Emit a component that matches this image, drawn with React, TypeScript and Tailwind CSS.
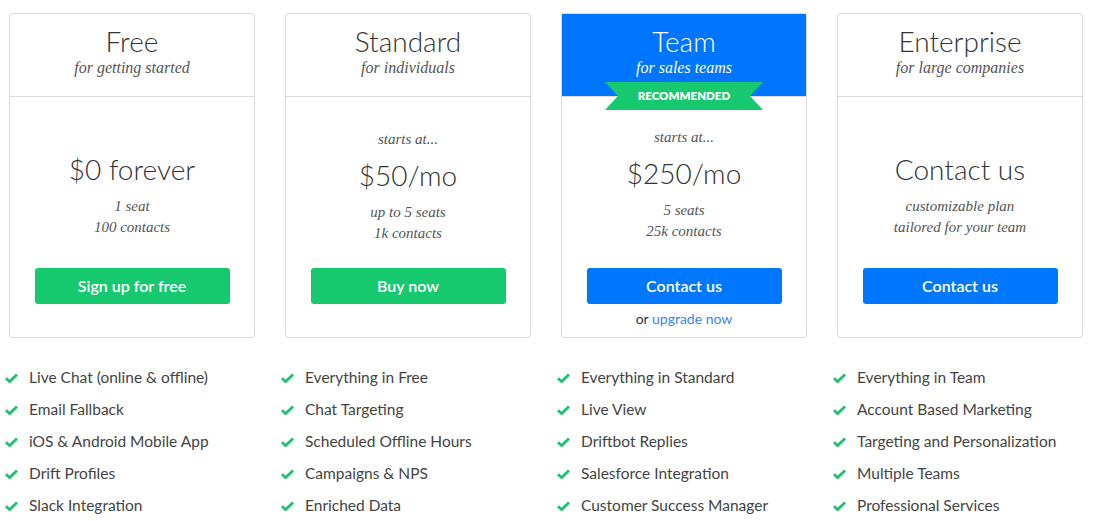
import React from 'react';

const plans = [
  {
    name: 'Free',
    tagline: 'for getting started',
    startsAt: false,
    price: '$0 forever',
    details: ['1 seat', '100 contacts'],
    cta: 'Sign up for free',
    color: 'green',
    features: ['Live Chat (online & offline)', 'Email Fallback', 'iOS & Android Mobile App', 'Drift Profiles', 'Slack Integration'],
  },
  {
    name: 'Standard',
    tagline: 'for individuals',
    startsAt: true,
    price: '$50/mo',
    details: ['up to 5 seats', '1k contacts'],
    cta: 'Buy now',
    color: 'green',
    features: ['Everything in Free', 'Chat Targeting', 'Scheduled Offline Hours', 'Campaigns & NPS', 'Enriched Data'],
  },
  {
    name: 'Team',
    tagline: 'for sales teams',
    startsAt: true,
    price: '$250/mo',
    details: ['5 seats', '25k contacts'],
    cta: 'Contact us',
    color: 'blue',
    recommended: true,
    features: ['Everything in Standard', 'Live View', 'Driftbot Replies', 'Salesforce Integration', 'Customer Success Manager'],
  },
  {
    name: 'Enterprise',
    tagline: 'for large companies',
    startsAt: false,
    price: 'Contact us',
    details: ['customizable plan', 'tailored for your team'],
    cta: 'Contact us',
    color: 'blue',
    features: ['Everything in Team', 'Account Based Marketing', 'Targeting and Personalization', 'Multiple Teams', 'Professional Services'],
  },
];

const sans = "font-['Lato','Open_Sans',sans-serif]";
const serif = "font-['Liberation_Serif',serif] italic";

function Check() {
  return (
    <svg width="13" height="10" viewBox="0 0 13 10" className="shrink-0">
      <path d="M1 5.2 L4.6 8.6 L12 1.4" fill="none" stroke="#1ec46c" strokeWidth="2.8" strokeLinejoin="miter" />
    </svg>
  );
}

function Ribbon() {
  return (
    <div className="absolute left-1/2 top-[68px] h-[28px] w-[158px] -translate-x-1/2">
      <svg width="158" height="28" viewBox="0 0 158 28" className="absolute inset-0">
        <polygon points="0,0 158,0 145,14 158,28 0,28 13,14" fill="#17c96e" />
      </svg>
      <div className={`relative flex h-full items-center justify-center text-[11.5px] font-extrabold text-white ${sans}`}>
        RECOMMENDED
      </div>
    </div>
  );
}

export default function App() {
  return (
    <div className={`h-[521px] w-[1095px] overflow-hidden bg-white ${sans}`}>
      <div className="ml-[9px] mt-[13px] grid w-[1074px] grid-cols-4 gap-x-[30px]">
        {plans.map((plan) => (
          <div key={plan.name} className="relative flex h-[325px] flex-col rounded-[3px] border border-[#dcdcdc]">
            <div
              className={`h-[83px] shrink-0 border-b border-[#dcdcdc] pt-[11px] text-center ${
                plan.recommended ? 'bg-[#0075ff] text-white' : 'text-[#333]'
              }`}
            >
              <div className="text-[28px] font-light leading-[32px]">{plan.name}</div>
              <div className={`text-[16px] leading-[22px] ${serif} ${plan.recommended ? 'text-white' : 'text-[#555]'}`}>
                {plan.tagline}
              </div>
            </div>
            {plan.recommended && <Ribbon />}
            <div className={`flex h-[171px] flex-col items-center text-center ${plan.startsAt ? (plan.recommended ? 'pt-[30px]' : 'pt-[32px]') : 'pt-[54px]'}`}>
              {plan.startsAt && <div className={`text-[15px] leading-[21px] text-[#555] ${serif}`}>starts at...</div>}
              <div className={`text-[28px] font-light leading-[36px] text-[#333] ${plan.startsAt ? 'mt-[7px]' : ''}`}>{plan.price}</div>
              <div className={`mt-[9px] text-[15px] leading-[21px] text-[#555] ${serif}`}>
                {plan.details.map((d) => (
                  <div key={d}>{d}</div>
                ))}
              </div>
            </div>
            <div className="flex justify-center">
              <button
                className={`h-[36px] w-[195px] rounded-[3px] text-[16px] font-semibold text-white ${
                  plan.color === 'green' ? 'bg-[#16c96f]' : 'bg-[#0077ff]'
                }`}
              >
                {plan.cta}
              </button>
            </div>
            {plan.recommended && (
              <div className="mt-[6px] text-center text-[14px] leading-[18px] text-[#333]">
                or <span className="text-[#3b82f6]">upgrade now</span>
              </div>
            )}
          </div>
        ))}
      </div>
      <div className="ml-[5px] mt-[24px] grid w-[1074px] grid-cols-4 gap-x-[30px]">
        {plans.map((plan) => (
          <ul key={plan.name} className="flex flex-col">
            {plan.features.map((f) => (
              <li key={f} className="flex h-[32px] items-center">
                <span className="flex w-[24px] items-center">
                  <Check />
                </span>
                <span className="text-[15.5px] text-[#444]">{f}</span>
              </li>
            ))}
          </ul>
        ))}
      </div>
    </div>
  );
}
